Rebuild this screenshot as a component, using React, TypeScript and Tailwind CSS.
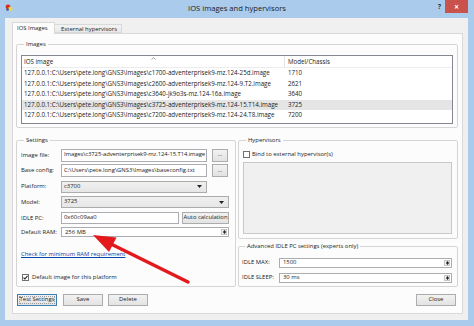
import React from "react";

interface ImageRow {
  path: string;
  model: string;
  selected?: boolean;
}

const images: ImageRow[] = [
  { path: "127.0.0.1:C:\\Users\\pete.long\\GNS3\\Images\\c1700-adventerprisek9-mz.124-25d.image", model: "1710" },
  { path: "127.0.0.1:C:\\Users\\pete.long\\GNS3\\Images\\c2600-adventerprisek9-mz.124-9.T2.image", model: "2621" },
  { path: "127.0.0.1:C:\\Users\\pete.long\\GNS3\\Images\\c3640-jk9o3s-mz.124-16a.image", model: "3640" },
  { path: "127.0.0.1:C:\\Users\\pete.long\\GNS3\\Images\\c3725-adventerprisek9-mz.124-15.T14.image", model: "3725", selected: true },
  { path: "127.0.0.1:C:\\Users\\pete.long\\GNS3\\Images\\c7200-adventerprisek9-mz.124-24.T8.image", model: "7200" },
];

const Group = ({ title, className = "", children }: { title: string; className?: string; children: React.ReactNode }) => (
  <fieldset className={`border border-[#d5d5d5] rounded-[2px] min-w-0 ${className}`}>
    <legend className="ml-[3px] px-[2px] leading-[9px]">{title}</legend>
    {children}
  </fieldset>
);

const Btn = ({ children, className = "", focused = false }: { children: React.ReactNode; className?: string; focused?: boolean }) => (
  <div
    className={`flex items-center justify-center border bg-linear-to-b from-[#f2f2f2] to-[#e3e3e3] leading-none whitespace-nowrap ${
      focused ? "border-[#3c7fb1] p-px" : "border-[#acacac]"
    } ${className}`}
  >
    {focused ? (
      <span className="w-full h-full flex items-center justify-center border border-dotted border-[#9a9a9a]">{children}</span>
    ) : (
      children
    )}
  </div>
);

const TextBox = ({ value, className = "" }: { value: string; className?: string }) => (
  <div className={`flex items-center border border-[#abadb3] bg-white pl-[2px] overflow-hidden whitespace-nowrap leading-none ${className}`}>
    {value}
  </div>
);

const Combo = ({ value, className = "" }: { value: string; className?: string }) => (
  <div className={`flex items-center border border-[#acacac] bg-linear-to-b from-[#f0f0f0] to-[#e6e6e6] pl-[2px] pr-[4px] leading-none ${className}`}>
    <span className="flex-1">{value}</span>
    <svg width="5" height="3" viewBox="0 0 5 3">
      <path d="M0 0h5L2.5 3z" fill="#222" />
    </svg>
  </div>
);

const Spin = ({ value, className = "" }: { value: string; className?: string }) => (
  <div className={`flex items-stretch border border-[#abadb3] bg-white leading-none ${className}`}>
    <span className="flex-1 flex items-center pl-[3px]">{value}</span>
    <div className="w-[6px] my-px mr-px flex flex-col border border-[#c5c5c5] bg-[#ececec]">
      <div className="flex-1 flex items-center justify-center">
        <svg width="3" height="2" viewBox="0 0 3 2"><path d="M0 2h3L1.5 0z" fill="#222" /></svg>
      </div>
      <div className="flex-1 flex items-center justify-center">
        <svg width="3" height="2" viewBox="0 0 3 2"><path d="M0 0h3L1.5 2z" fill="#222" /></svg>
      </div>
    </div>
  </div>
);

const Check = ({ checked = false }: { checked?: boolean }) => (
  <div className="w-[7px] h-[7px] border border-[#707070] bg-white flex items-center justify-center shrink-0">
    {checked && (
      <svg width="5" height="5" viewBox="0 0 5 5">
        <path d="M0.5 2.6 1.9 4 4.5 0.8" fill="none" stroke="#222" strokeWidth="1.1" />
      </svg>
    )}
  </div>
);

const AppIcon = () => (
  <svg width="8" height="8" viewBox="0 0 8 8">
    <circle cx="3" cy="3" r="2.4" fill="#d0302c" />
    <circle cx="5.3" cy="5" r="2.2" fill="#f3d23a" />
    <circle cx="2.6" cy="5.6" r="1.4" fill="#3a63c4" />
  </svg>
);

const SettingRow = ({ label, children, className = "h-[13px]" }: { label: string; children: React.ReactNode; className?: string }) => (
  <div className={`flex items-center ${className}`}>
    <span className="w-[40px] shrink-0 whitespace-nowrap">{label}</span>
    {children}
  </div>
);

export default function App() {
  return (
    <div className="relative w-[474px] h-[326px] overflow-hidden bg-[#abcbec] flex flex-col font-['Open_Sans','Liberation_Sans',sans-serif] text-[5.9px] text-[#222]">
      {/* title bar */}
      <div className="h-[18px] shrink-0 grid grid-cols-[1fr_auto_1fr] items-start">
        <div className="pl-[5px] pt-[4px]">
          <AppIcon />
        </div>
        <div className="pt-[3px] text-[7.6px] leading-[10px] text-[#1a1a1a]">IOS images and hypervisors</div>
        <div className="flex justify-end items-start pr-[6px]">
          <span className="mt-[3px] mr-[4px] text-[7px] font-bold leading-[8px] text-[#333]">?</span>
          <div className="w-[23px] h-[13px] bg-[#c9524c] flex items-center justify-center text-white text-[8px] font-bold leading-none">
            ×
          </div>
        </div>
      </div>

      {/* window body */}
      <div className="ml-[5px] mr-[6px] mb-[6px] flex-1 bg-[#f0f0f0] pt-[4px] pl-[7px] pr-[5px] pb-[6px] flex flex-col">
        <div className="flex items-end -mb-px relative z-10">
          <div className="w-[43px] h-[12px] border border-b-0 border-[#d9d9d9] bg-[#fcfcfc] pl-[4px] leading-[11px]">IOS Images</div>
          <div className="w-[67px] h-[9px] mb-px border border-l-0 border-[#d9d9d9] bg-linear-to-b from-[#f3f3f3] to-[#e8e8e8] pl-[6px] leading-[8px] whitespace-nowrap">
            External hypervisors
          </div>
        </div>

        <div className="flex-1 border border-[#d9d9d9] bg-[#fcfcfc] pt-[6px] pl-[3px] pr-[4px] flex flex-col">
          {/* Images */}
          <Group title="Images" className="px-[4px] pb-[3px]">
            <div className="mt-[5.5px] h-[69px] border border-[#828790] bg-white overflow-hidden text-[6.2px]">
              <div className="relative h-[12.5px] flex leading-[12px] border-b border-[#ececec]">
                <div className="w-[263px] pl-[2px] border-r border-[#e5e5e5]">IOS image</div>
                <div className="pl-[3px]">Model/Chassis</div>
                <svg className="absolute left-[129px] top-[1px]" width="5" height="3" viewBox="0 0 5 3">
                  <path d="M0.5 2.5 2.5 0.6 4.5 2.5" fill="none" stroke="#8a8a8a" strokeWidth="0.8" />
                </svg>
              </div>
              {images.map((img) => (
                <div key={img.model} className={`h-[10.5px] flex leading-[10.5px] whitespace-nowrap ${img.selected ? "bg-[#e5e5e5]" : ""}`}>
                  <div className="w-[263px] pl-[2px] overflow-hidden">{img.path}</div>
                  <div className="pl-[3px]">{img.model}</div>
                </div>
              ))}
            </div>
          </Group>

          <div className="flex gap-[2px] mt-[8.5px]">
            {/* Settings */}
            <Group title="Settings" className="w-[220px] shrink-0 pl-[4px] pr-[6px] pb-[3.5px]">
              <div className="mt-[3.5px] flex flex-col gap-[2.8px]">
                <SettingRow label="Image file:">
                  <TextBox value="Images\c3725-adventerprisek9-mz.124-15.T14.image" className="w-[146px] h-full tracking-[-0.08px]" />
                  <Btn className="ml-[5px] w-[16px] h-full">...</Btn>
                </SettingRow>
                <SettingRow label="Base config:">
                  <TextBox value="C:\Users\pete.long\GNS3\Images\baseconfig.txt" className="w-[146px] h-full" />
                  <Btn className="ml-[5px] w-[16px] h-full">...</Btn>
                </SettingRow>
                <SettingRow label="Platform:">
                  <Combo value="c3700" className="w-[146px] h-[12px]" />
                </SettingRow>
                <SettingRow label="Model:">
                  <Combo value="3725" className="flex-1 h-[12px]" />
                </SettingRow>
                <SettingRow label="IDLE PC:">
                  <TextBox value="0x60c09aa0" className="w-[118px] h-[12px]" />
                  <Btn className="ml-[3px] flex-1 h-[12px]">Auto calculation</Btn>
                </SettingRow>
                <SettingRow label="Default RAM:" className="h-[10px]">
                  <Spin value="256 MB" className="flex-1 h-full" />
                </SettingRow>
              </div>
              <div className="mt-[12.5px] leading-[9px] text-[#0645ad] underline">Check for minimum RAM requirement</div>
              <div className="mt-[14px] h-[9px] flex items-center gap-[3px] pl-px">
                <Check checked />
                <span>Default image for this platform</span>
              </div>
            </Group>

            {/* right column */}
            <div className="flex-1 flex flex-col gap-[3.5px]">
              <Group title="Hypervisors" className="pl-[4px] pr-[5px] pb-[4px]">
                <div className="mt-[4.5px] h-[9px] flex items-center gap-[2px]">
                  <Check />
                  <span>Bind to external hypervisor(s)</span>
                </div>
                <div className="mt-[3px] h-[72px] border border-[#c8c8c8] bg-[#f0f0f0]" />
              </Group>
              <Group title="Advanced IDLE PC settings (experts only)" className="pl-[3px] pr-[5px] pb-[3px]">
                <div className="mt-[6.5px] flex flex-col gap-[5px]">
                  <div className="flex items-center h-[10px]">
                    <span className="w-[37px] shrink-0">IDLE MAX:</span>
                    <Spin value="1500" className="flex-1 h-full" />
                  </div>
                  <div className="flex items-center h-[10px]">
                    <span className="w-[37px] shrink-0 whitespace-nowrap">IDLE SLEEP:</span>
                    <Spin value="30 ms" className="flex-1 h-full" />
                  </div>
                </div>
              </Group>
            </div>
          </div>

          {/* buttons */}
          <div className="mt-[7px] flex items-center pl-[1px]">
            <Btn focused className="w-[40px] h-[12px]">Test Settings</Btn>
            <Btn className="ml-[6px] w-[40px] h-[12px]">Save</Btn>
            <Btn className="ml-[5px] w-[40px] h-[12px]">Delete</Btn>
            <Btn className="ml-auto mr-[2px] w-[40px] h-[12px]">Close</Btn>
          </div>
        </div>
      </div>

      {/* red annotation arrow */}
      <svg className="absolute inset-0 pointer-events-none" width="474" height="326" viewBox="0 0 474 326">
        <line x1="188" y1="282" x2="111" y2="244" stroke="#e3191b" strokeWidth="3.5" strokeLinecap="round" />
        <path d="M93 235 L116.5 237.5 L109 252 Z" fill="#e3191b" />
      </svg>
    </div>
  );
}
